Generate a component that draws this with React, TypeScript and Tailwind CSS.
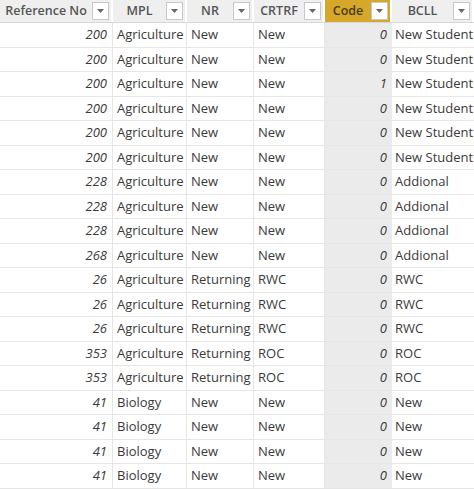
type Row = { ref: number; mpl: string; nr: string; crtrf: string; code: number; bcll: string }

const rows: Row[] = [
  ...Array.from({ length: 6 }, (_, i) => ({ ref: 200, mpl: 'Agriculture', nr: 'New', crtrf: 'New', code: i === 2 ? 1 : 0, bcll: 'New Student' })),
  ...Array.from({ length: 3 }, () => ({ ref: 228, mpl: 'Agriculture', nr: 'New', crtrf: 'New', code: 0, bcll: 'Addional' })),
  { ref: 268, mpl: 'Agriculture', nr: 'New', crtrf: 'New', code: 0, bcll: 'Addional' },
  ...Array.from({ length: 3 }, () => ({ ref: 26, mpl: 'Agriculture', nr: 'Returning', crtrf: 'RWC', code: 0, bcll: 'RWC' })),
  ...Array.from({ length: 2 }, () => ({ ref: 353, mpl: 'Agriculture', nr: 'Returning', crtrf: 'ROC', code: 0, bcll: 'ROC' })),
  ...Array.from({ length: 4 }, () => ({ ref: 41, mpl: 'Biology', nr: 'New', crtrf: 'New', code: 0, bcll: 'New' })),
]

const cols = [
  { label: 'Reference No', w: 'w-[113px]' },
  { label: 'MPL', w: 'w-[74px]' },
  { label: 'NR', w: 'w-[67px]' },
  { label: 'CRTRF', w: 'w-[71px]' },
  { label: 'Code', w: 'w-[67px]', active: true },
  { label: 'BCLL', w: 'w-[82px]' },
]

function HeaderCell({ label, w, active }: { label: string; w: string; active?: boolean }) {
  return (
    <div className={`${w} h-[22px] flex items-center pr-[2px] border-r-2 border-white ${active ? 'bg-[#d5a829]' : 'bg-[#efefef]'}`}>
      <span className={`flex-1 text-center font-semibold text-[12.5px] ${active ? 'text-[#4a3a10]' : 'text-[#555]'}`}>{label}</span>
      <div className="w-[17px] h-[18px] bg-white border border-[#c8c8c8] flex items-center justify-center">
        <svg width="7" height="4" viewBox="0 0 7 4">
          <path d="M0 0 H7 L3.5 4 Z" fill="#666" />
        </svg>
      </div>
    </div>
  )
}

export default function App() {
  return (
    <div className="w-[474px] h-[490px] bg-white overflow-hidden text-[#3a3a3a]" style={{ fontFamily: '"Open Sans", "Noto Sans", sans-serif' }}>
      <div className="flex border-b border-[#d8d8d8]">
        {cols.map((c) => (
          <HeaderCell key={c.label} label={c.label} w={c.w} active={c.active} />
        ))}
      </div>
      {rows.map((r, i) => (
        <div key={i} className="flex h-[24.5px] border-b border-[#e6e6e6] text-[13px] leading-none">
          <div className="w-[113px] flex items-center justify-end pr-[5px] italic border-r border-[#e6e6e6]">{r.ref}</div>
          <div className="w-[74px] flex items-center pl-[4px] border-r border-[#e6e6e6]">{r.mpl}</div>
          <div className="w-[67px] flex items-center pl-[4px] border-r border-[#e6e6e6]">{r.nr}</div>
          <div className="w-[71px] flex items-center pl-[4px] border-r border-[#e6e6e6]">{r.crtrf}</div>
          <div className="w-[67px] flex items-center justify-end pr-[5px] italic bg-[#ebebeb]">{r.code}</div>
          <div className="w-[82px] flex items-center pl-[3px] whitespace-nowrap">{r.bcll}</div>
        </div>
      ))}
    </div>
  )
}
